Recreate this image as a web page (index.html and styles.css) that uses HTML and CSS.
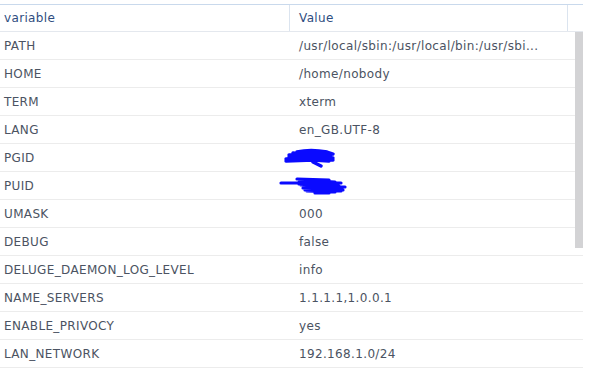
FILE: index.html
```html
<!DOCTYPE html>
<html>
<head>
<meta charset="utf-8">
<link rel="stylesheet" href="styles.css">
</head>
<body>
<div class="grid">
  <div class="head">
    <div class="hcell first">variable</div>
    <div class="hcell">Value</div>
    <div class="hcell end"></div>
  </div>
  <div class="body">
    <div class="row"><div class="c k">PATH</div><div class="c v">/usr/local/sbin:/usr/local/bin:/usr/sbi...</div></div>
    <div class="row"><div class="c k">HOME</div><div class="c v">/home/nobody</div></div>
    <div class="row"><div class="c k">TERM</div><div class="c v">xterm</div></div>
    <div class="row"><div class="c k">LANG</div><div class="c v">en_GB.UTF-8</div></div>
    <div class="row"><div class="c k">PGID</div><div class="c v redact">
      <svg class="scribble s1" width="60" height="24" viewBox="0 0 60 24"><path d="M14 4 C22 2 34 2 44 4 L50 6 M6 7 L48 7 M10 5 L46 9 M3 11 L50 10 M3 13 L30 12 L46 13 M30 14 L38 18 M8 9 L50 12 M20 6 L40 11 M16 4 L48 6 M6 9 L44 8 M12 12 L48 11" fill="none" stroke="#0a0aff" stroke-width="3.4" stroke-linecap="round" stroke-linejoin="round"/></svg>
    </div></div>
    <div class="row"><div class="c k">PUID</div><div class="c v redact">
      <svg class="scribble s2" width="70" height="22" viewBox="0 0 70 22"><path d="M2 7 L30 7 M18 3 L50 4 M20 6 L62 7 M22 9 L66 11 M24 12 L60 13 M28 15 L56 16 M36 17 L50 17 M26 5 L58 9 M30 11 L64 14 M22 4 L56 6 M20 8 L60 10 M26 14 L62 15" fill="none" stroke="#0a0aff" stroke-width="3.2" stroke-linecap="round" stroke-linejoin="round"/></svg>
    </div></div>
    <div class="row"><div class="c k">UMASK</div><div class="c v">000</div></div>
    <div class="row"><div class="c k">DEBUG</div><div class="c v">false</div></div>
    <div class="row"><div class="c k">DELUGE_DAEMON_LOG_LEVEL</div><div class="c v">info</div></div>
    <div class="row"><div class="c k">NAME_SERVERS</div><div class="c v">1.1.1.1,1.0.0.1</div></div>
    <div class="row"><div class="c k">ENABLE_PRIVOCY</div><div class="c v">yes</div></div>
    <div class="row"><div class="c k">LAN_NETWORK</div><div class="c v">192.168.1.0/24</div></div>
    <div class="scrollbar"></div>
  </div>
</div>
</body>
</html>
```
FILE: styles.css
```css
html, body {
  margin: 0;
  padding: 0;
  background: #ffffff;
}
body {
  font-family: "DejaVu Sans", Verdana, sans-serif;
  font-size: 12px;
  letter-spacing: 0.35px;
}
.grid {
  width: 583px;
  padding-top: 4px;
}
.head {
  display: grid;
  grid-template-columns: 289px 278px 16px;
  height: 26px;
  border-top: 1px solid #c9d9ec;
  border-bottom: 1px solid #e4e8ee;
}
.hcell {
  display: flex;
  align-items: center;
  padding-left: 9px;
  color: #2f4d80;
  border-left: 1px solid #dbe4ef;
}
.hcell.first {
  padding-left: 4px;
  border-left: none;
}
.body {
  position: relative;
}
.row {
  display: grid;
  grid-template-columns: 289px 1fr;
  height: 27px;
  border-bottom: 1px solid #ececec;
}
.c {
  display: flex;
  align-items: center;
  color: #4b5362;
  white-space: nowrap;
  overflow: hidden;
}
.k {
  padding-left: 4px;
}
.v {
  padding-left: 10px;
}
.redact {
  position: relative;
  overflow: visible;
}
.scribble {
  position: absolute;
}
.s1 {
  left: -6px;
  top: 4px;
}
.s2 {
  left: -10px;
  top: 4px;
}
.scrollbar {
  position: absolute;
  left: 575px;
  top: 0;
  width: 8px;
  height: 216px;
  background: #d3d3d5;
}
```
